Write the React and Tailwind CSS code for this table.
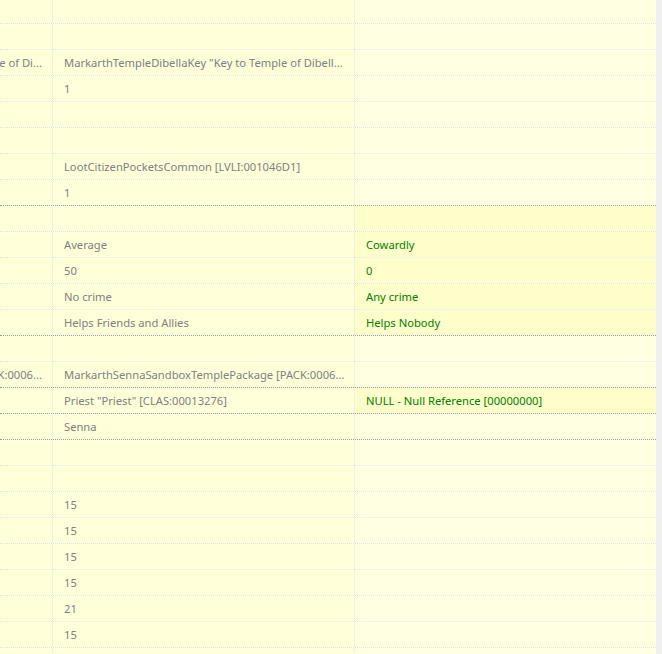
import React from 'react';

const rows = [
  { line: 'light' },
  { line: 'light' },
  { a: 'e of Di...', b: 'MarkarthTempleDibellaKey "Key to Temple of Dibell...', line: 'light' },
  { b: '1', line: 'light' },
  { line: 'light' },
  { line: 'light' },
  { b: 'LootCitizenPocketsCommon [LVLI:001046D1]', line: 'light' },
  { b: '1', line: 'dark' },
  { hl: true, line: 'light' },
  { b: 'Average', c: 'Cowardly', hl: true, line: 'light' },
  { b: '50', c: '0', hl: true, line: 'light' },
  { b: 'No crime', c: 'Any crime', hl: true, line: 'light' },
  { b: 'Helps Friends and Allies', c: 'Helps Nobody', hl: true, line: 'dark' },
  { line: 'light' },
  { a: 'K:0006...', b: 'MarkarthSennaSandboxTemplePackage [PACK:0006...', line: 'dark' },
  { b: 'Priest "Priest" [CLAS:00013276]', c: 'NULL - Null Reference [00000000]', hl: true, line: 'dark' },
  { b: 'Senna', line: 'dark' },
  { line: 'light' },
  { line: 'light' },
  { b: '15', line: 'light' },
  { b: '15', line: 'light' },
  { b: '15', line: 'light' },
  { b: '15', line: 'light' },
  { b: '21', line: 'light' },
  { b: '15', line: 'light' },
  { line: 'light' },
];

const Row = ({ row }) => {
  const lineClass = row.line === 'dark' ? 'border-[#9a9a9a]' : 'border-[#e4e4e4]';
  return (
    <div className={`flex h-[26px] border-b border-dotted ${lineClass}`}>
      <div className="w-[53px] shrink-0 flex items-center justify-end overflow-hidden border-r border-dotted border-[#e4e4e4] pr-[10px] pt-[1px] bg-[#ffffd9]">
        <span className="whitespace-nowrap text-[#808080]">{row.a}</span>
      </div>
      <div className="w-[302px] shrink-0 flex items-center overflow-hidden border-r border-dotted border-[#e4e4e4] pl-[11px] pt-[1px] bg-[#ffffd9]">
        <span className="whitespace-nowrap text-[#808080]">{row.b}</span>
      </div>
      <div className={`flex-1 flex items-center pl-[11px] pt-[1px] ${row.hl ? 'bg-[#ffffcc]' : 'bg-[#ffffe2]'}`}>
        <span className="whitespace-nowrap text-[#008000]">{row.c}</span>
      </div>
    </div>
  );
};

const App = () => {
  return (
    <div className="flex h-[654px] w-[662px] overflow-hidden bg-[#ffffe2] font-['Noto_Sans',sans-serif] text-[11.2px]">
      <div className="flex-1 overflow-hidden">
        <div className="mt-[-2px]">
          {rows.map((row, i) => (
            <Row key={i} row={row} />
          ))}
        </div>
      </div>
      <div className="w-[6px] shrink-0 bg-[#f0f0f0]" />
    </div>
  );
};

export default App;
